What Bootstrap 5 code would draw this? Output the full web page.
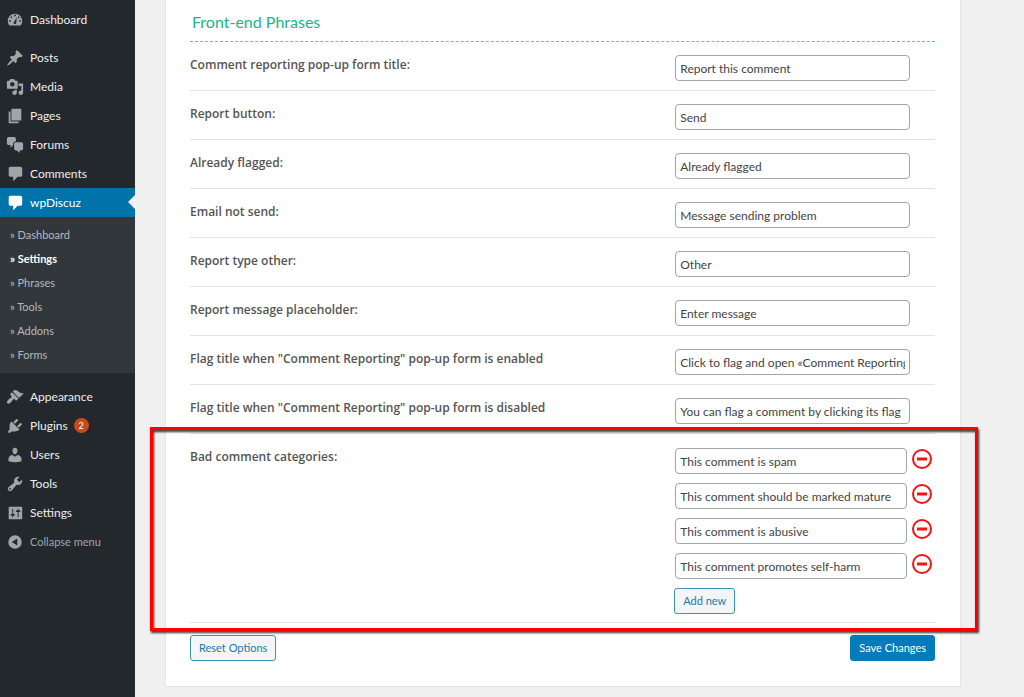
<!DOCTYPE html>
<html lang="en">
<head>
<meta charset="utf-8">
<meta name="viewport" content="width=device-width, initial-scale=1">
<title>wpDiscuz Settings</title>
<link href="https://cdn.jsdelivr.net/npm/bootstrap@5.3.0/dist/css/bootstrap.min.css" rel="stylesheet">
<style>
body { font-family: Lato, "Open Sans", sans-serif; font-size: 12px; line-height: 18px; color: #444; background: #f0f0f0; }
.side-menu { width: 135px; background: #23282d; padding-top: 5px; }
.side-menu .nav-link { display: flex; align-items: center; gap: 6px; height: 29px; padding: 0 6px; color: #eee; }
.side-menu svg { width: 18px; height: 18px; fill: #a0a5aa; flex: none; }
.side-menu .nav-link.active { background: #0073aa; color: #fff; position: relative; }
.side-menu .nav-link.active svg { fill: #fff; }
.side-menu .nav-link.active::after { content: ""; position: absolute; right: 0; top: 7px; border: 7px solid transparent; border-left: 0; border-right-color: #f0f0f0; }
.sub-menu { background: #32373c; padding: 6px 10px; font-size: 11px; }
.sub-menu a { display: block; line-height: 24px; color: #b4b9be; text-decoration: none; }
.sub-menu a.current { color: #fff; font-weight: 700; }
.group-gap { margin-top: 9px; }
.side-menu .collapse-btn { color: #a0a5aa; font-size: 11px; border: 0; background: none; }
.update-count { background: #ca4a1f; color: #fff; font-size: 9px; line-height: 15px; width: 15px; height: 15px; }
.content-area { padding: 0 63px 11px 30px; }
.panel { background: #fff; border: 1px solid #e5e5e5; border-top: 0; padding: 0 25px 25px 24px; }
.panel-title { color: #1eb38b; font-size: 16px; line-height: 22px; padding: 11px 2px 8px; margin: 0; border-bottom: 1px dashed #5bc7ab; font-weight: 400; }
.option-row { border-bottom: 1px solid #e3e3e3; padding: 13px 0 9px; }
.option-row > .option-label { width: 65%; font-family: "Open Sans", sans-serif; font-weight: 600; color: #555; padding-top: 1px; }
.option-row > .option-field { width: 35%; }
.text-field { height: 26px; margin-left: 1px; padding: 1px 4px 0; border: 1px solid #a0a5ae; border-radius: 4px; font-size: 12px; line-height: 18px; color: #444; }
.text-field.form-control { width: 90%; }
.phrase-item .text-field.form-control { width: 232px; }
.phrase-list { gap: 9px; padding-top: 1px; }
.remove-btn { width: 22px; height: 22px; padding: 0; border: 0; background: none; display: flex; }
.remove-btn svg { width: 22px; height: 22px; }
.option-row.marked { position: relative; padding-bottom: 8px; }
.mark-frame { position: absolute; inset: -7px -43px -9px -40px; border: 3px solid #f00; filter: drop-shadow(1px 2px 1px rgba(0,0,0,.8)); pointer-events: none; }
.wp-btn { height: 26px; padding: 0 8px; border-radius: 3px; font-size: 11px; line-height: 24px; }
.wp-btn.btn-outline-primary { color: #1f7aab; border-color: #3c93be; background: #f3f5f6; }
.wp-btn.btn-primary { background: #007cba; border-color: #007cba; }
</style>
</head>
<body>
<div class="d-flex min-vh-100">
  <nav class="side-menu flex-shrink-0" aria-label="Main menu">
    <a class="nav-link" href="#"><svg viewBox="0 0 20 20"><path fill-rule="evenodd" d="M3.760 16h12.480c1.100-1.370 1.760-3.110 1.760-5 0-4.420-3.580-8-8-8s-8 3.580-8 8c0 1.890.66 3.630 1.760 5zM10 4c.55 0 1 .45 1 1s-.45 1-1 1-1-.45-1-1 .45-1 1-1zM6 6c.55 0 1 .45 1 1s-.45 1-1 1-1-.45-1-1 .45-1 1-1zm8 0c.55 0 1 .45 1 1s-.45 1-1 1-1-.45-1-1 .45-1 1-1zm-8.600 5a1 1 0 1 1-2 0 1 1 0 0 1 2 0zM16.600 11a1 1 0 1 1-2 0 1 1 0 0 1 2 0zM12 7l-.600 6c0 .8-.6 1.500-1.400 1.500S8.500 13.800 8.500 13c0-.6.3-1 .8-1.300z"/></svg>Dashboard</a>
    <a class="nav-link group-gap" href="#"><svg viewBox="0 0 20 20"><path d="M10.440 3.020l1.820-1.820 6.360 6.350-1.830 1.820c-1.050-.68-2.480-.57-3.410.36l-.75.75c-.92.93-1.040 2.350-.35 3.410l-1.830 1.820-2.410-2.410-2.800 2.790c-.42.42-3.380 2.710-3.800 2.290s1.860-3.390 2.280-3.810l2.790-2.790L4.100 9.360l1.820-1.830c1.050.69 2.480.57 3.400-.36l.75-.74c.93-.92 1.050-2.350.37-3.410z"/></svg>Posts</a>
    <a class="nav-link" href="#"><svg viewBox="0 0 20 20"><path d="M13 11V4c0-.55-.45-1-1-1h-1.670L9 1H5L3.670 3H2c-.55 0-1 .45-1 1v7c0 .55.45 1 1 1h10c.55 0 1-.45 1-1zM7 4.500c1.380 0 2.500 1.120 2.500 2.500S8.380 9.500 7 9.500 4.500 8.380 4.500 7 5.620 4.500 7 4.500zM14 6h5v10.500c0 1.380-1.120 2.500-2.500 2.500S14 17.880 14 16.500s1.120-2.500 2.500-2.500c.17 0 .34.02.5.05V9h-3V6zm-4 8.050V13h2v3.500c0 1.380-1.120 2.500-2.500 2.500S7 17.880 7 16.500 8.120 14 9.500 14c.17 0 .34.02.5.05z"/></svg>Media</a>
    <a class="nav-link" href="#"><svg viewBox="0 0 20 20"><path d="M6 15V2h11v13H6zm-1 1h9v2H3V5h2v11z"/></svg>Pages</a>
    <a class="nav-link" href="#"><svg viewBox="0 0 20 20"><path d="M11 6h-.82C9.070 6 8 7.200 8 8.160V10l-3 3v-3H3c-1.100 0-2-.9-2-2V3c0-1.100.9-2 2-2h6c1.100 0 2 .9 2 2v3zm0 1h6c1.100 0 2 .9 2 2v5c0 1.100-.9 2-2 2h-2v3l-3-3h-1c-1.100 0-2-.9-2-2V9c0-1.100.9-2 2-2z"/></svg>Forums</a>
    <a class="nav-link" href="#"><svg viewBox="0 0 20 20"><path d="M5 2h11c1.100 0 2 .9 2 2v7c0 1.100-.9 2-2 2h-3l-5 5v-5H5c-1.100 0-2-.9-2-2V4c0-1.100.9-2 2-2z"/></svg>Comments</a>
    <a class="nav-link active" href="#" aria-current="page"><svg viewBox="0 0 20 20"><path d="M5 2h11c1.100 0 2 .9 2 2v7c0 1.100-.9 2-2 2h-3l-5 5v-5H5c-1.100 0-2-.9-2-2V4c0-1.100.9-2 2-2z"/></svg>wpDiscuz</a>
    <div class="sub-menu">
      <a href="#">» Dashboard</a>
      <a href="#" class="current">» Settings</a>
      <a href="#">» Phrases</a>
      <a href="#">» Tools</a>
      <a href="#">» Addons</a>
      <a href="#">» Forms</a>
    </div>
    <a class="nav-link group-gap" href="#"><svg viewBox="0 0 20 20"><path d="M14.480 11.060L7.410 3.990l1.500-1.500c.5-.56 2.300-.47 3.510.32 1.210.8 1.430 1.280 2.910 2.100 1.180.64 2.450 1.260 4.450.85zm-.71.71L6.700 4.700 4.930 6.470c-.39.39-.39 1.020 0 1.410l1.060 1.060c.39.39.39 1.030 0 1.420-.6.6-1.430 1.110-2.210 1.690-.35.26-.7.53-1.010.84C1.430 14.230.4 16.080 1.400 17.070c.99 1 2.840-.03 4.180-1.360.31-.31.58-.66.85-1.020.57-.78 1.080-1.610 1.690-2.210.39-.39 1.020-.39 1.410 0l1.060 1.060c.39.39 1.020.39 1.410 0z"/></svg>Appearance</a>
    <a class="nav-link" href="#"><svg viewBox="0 0 20 20"><path d="M13.110 4.360L9.870 7.600 8 5.730l3.240-3.240c.35-.34 1.050-.2 1.560.32.52.51.66 1.210.31 1.550zm-8 1.770l.91-1.120 9.010 9.010-1.190.84c-.71.71-2.630 1.160-3.820 1.160H6.140L4.900 17.260c-.59.59-1.540.59-2.120 0-.59-.58-.59-1.530 0-2.120l1.240-1.240v-3.880c0-1.130.4-3.190 1.090-3.890zm7.260 3.970l3.240-3.240c.34-.35 1.040-.21 1.550.31.52.51.66 1.210.31 1.550l-3.240 3.250z"/></svg>Plugins <span class="update-count rounded-circle text-center">2</span></a>
    <a class="nav-link" href="#"><svg viewBox="0 0 20 20"><path d="M10 9.250c-2.270 0-2.730-3.440-2.730-3.440C7 4.020 7.820 2 9.970 2c2.160 0 2.980 2.020 2.710 3.810 0 0-.41 3.440-2.680 3.440zm0 2.570L12.720 10c2.390 0 4.520 2.330 4.520 4.530v2.490s-3.650 1.130-7.240 1.130c-3.650 0-7.240-1.130-7.240-1.130v-2.490c0-2.250 1.940-4.480 4.470-4.480z"/></svg>Users</a>
    <a class="nav-link" href="#"><svg viewBox="0 0 20 20"><path fill-rule="evenodd" d="M16.680 9.770c-1.340 1.340-3.300 1.670-4.950.99l-5.410 6.520c-.99.99-2.590.99-3.580 0s-.99-2.590 0-3.570l6.520-5.420c-.68-1.650-.35-3.610.99-4.950 1.280-1.280 3.120-1.620 4.720-1.060l-2.890 2.890 2.820 2.820 2.860-2.870c.53 1.580.18 3.390-1.080 4.650zM3.810 16.210c.4.39 1.040.39 1.430 0 .4-.4.4-1.040 0-1.430-.39-.4-1.030-.4-1.430 0-.39.39-.39 1.030 0 1.430z"/></svg>Tools</a>
    <a class="nav-link" href="#"><svg viewBox="0 0 20 20"><path fill-rule="evenodd" d="M18 16V4c0-.55-.45-1-1-1H4c-.55 0-1 .45-1 1v12c0 .55.45 1 1 1h13c.55 0 1-.45 1-1zM8 11h1c.55 0 1 .45 1 1s-.45 1-1 1H8v1.500c0 .28-.22.5-.5.5s-.5-.22-.5-.5V13H6c-.55 0-1-.45-1-1s.45-1 1-1h1V5.500c0-.28.22-.5.5-.5s.5.22.5.5V11zm5-2h-1c-.55 0-1-.45-1-1s.45-1 1-1h1V5.500c0-.28.22-.5.5-.5s.5.22.5.5V7h1c.55 0 1 .45 1 1s-.45 1-1 1h-1v5.500c0 .28-.22.5-.5.5s-.5-.22-.5-.5V9z"/></svg>Settings</a>
    <button type="button" class="nav-link collapse-btn"><svg viewBox="0 0 20 20"><path fill-rule="evenodd" d="M10 2.500a7.500 7.500 0 1 0 0 15 7.500 7.500 0 0 0 0-15zM12.500 6v8L6.500 10z"/></svg>Collapse menu</button>
  </nav>

  <main class="content-area flex-grow-1">
    <form class="panel">
      <h2 class="panel-title">Front-end Phrases</h2>
      <div class="option-row d-flex"><label class="option-label" for="f1">Comment reporting pop-up form title:</label><div class="option-field"><input id="f1" type="text" class="form-control text-field" value="Report this comment"></div></div>
      <div class="option-row d-flex"><label class="option-label" for="f2">Report button:</label><div class="option-field"><input id="f2" type="text" class="form-control text-field" value="Send"></div></div>
      <div class="option-row d-flex"><label class="option-label" for="f3">Already flagged:</label><div class="option-field"><input id="f3" type="text" class="form-control text-field" value="Already flagged"></div></div>
      <div class="option-row d-flex"><label class="option-label" for="f4">Email not send:</label><div class="option-field"><input id="f4" type="text" class="form-control text-field" value="Message sending problem"></div></div>
      <div class="option-row d-flex"><label class="option-label" for="f5">Report type other:</label><div class="option-field"><input id="f5" type="text" class="form-control text-field" value="Other"></div></div>
      <div class="option-row d-flex"><label class="option-label" for="f6">Report message placeholder:</label><div class="option-field"><input id="f6" type="text" class="form-control text-field" value="Enter message"></div></div>
      <div class="option-row d-flex"><label class="option-label" for="f7">Flag title when "Comment Reporting" pop-up form is enabled</label><div class="option-field"><input id="f7" type="text" class="form-control text-field" value="Click to flag and open «Comment Reporting» form"></div></div>
      <div class="option-row d-flex"><label class="option-label" for="f8">Flag title when "Comment Reporting" pop-up form is disabled</label><div class="option-field"><input id="f8" type="text" class="form-control text-field" value="You can flag a comment by clicking its flag"></div></div>
      <div class="option-row marked d-flex">
        <label class="option-label" for="c1">Bad comment categories:</label>
        <div class="option-field phrase-list d-flex flex-column align-items-start">
          <div class="phrase-item d-flex gap-1"><input id="c1" type="text" class="form-control text-field" value="This comment is spam"><button type="button" class="remove-btn" aria-label="Remove"><svg viewBox="0 0 22 22" fill="none" stroke="#fb1010"><circle cx="11" cy="11" r="9" stroke-width="2"/><path d="M6 11h10" stroke-width="3"/></svg></button></div>
          <div class="phrase-item d-flex gap-1"><input type="text" aria-label="Category 2" class="form-control text-field" value="This comment should be marked mature"><button type="button" class="remove-btn" aria-label="Remove"><svg viewBox="0 0 22 22" fill="none" stroke="#fb1010"><circle cx="11" cy="11" r="9" stroke-width="2"/><path d="M6 11h10" stroke-width="3"/></svg></button></div>
          <div class="phrase-item d-flex gap-1"><input type="text" aria-label="Category 3" class="form-control text-field" value="This comment is abusive"><button type="button" class="remove-btn" aria-label="Remove"><svg viewBox="0 0 22 22" fill="none" stroke="#fb1010"><circle cx="11" cy="11" r="9" stroke-width="2"/><path d="M6 11h10" stroke-width="3"/></svg></button></div>
          <div class="phrase-item d-flex gap-1"><input type="text" aria-label="Category 4" class="form-control text-field" value="This comment promotes self-harm"><button type="button" class="remove-btn" aria-label="Remove"><svg viewBox="0 0 22 22" fill="none" stroke="#fb1010"><circle cx="11" cy="11" r="9" stroke-width="2"/><path d="M6 11h10" stroke-width="3"/></svg></button></div>
          <button type="button" class="btn btn-outline-primary wp-btn">Add new</button>
        </div>
        <div class="mark-frame"></div>
      </div>
      <div class="d-flex justify-content-between mt-2 pt-1">
        <button type="button" class="btn btn-outline-primary wp-btn">Reset Options</button>
        <button type="submit" class="btn btn-primary wp-btn">Save Changes</button>
      </div>
    </form>
  </main>
</div>
<script src="https://cdn.jsdelivr.net/npm/bootstrap@5.3.0/dist/js/bootstrap.bundle.min.js"></script>
</body>
</html>
